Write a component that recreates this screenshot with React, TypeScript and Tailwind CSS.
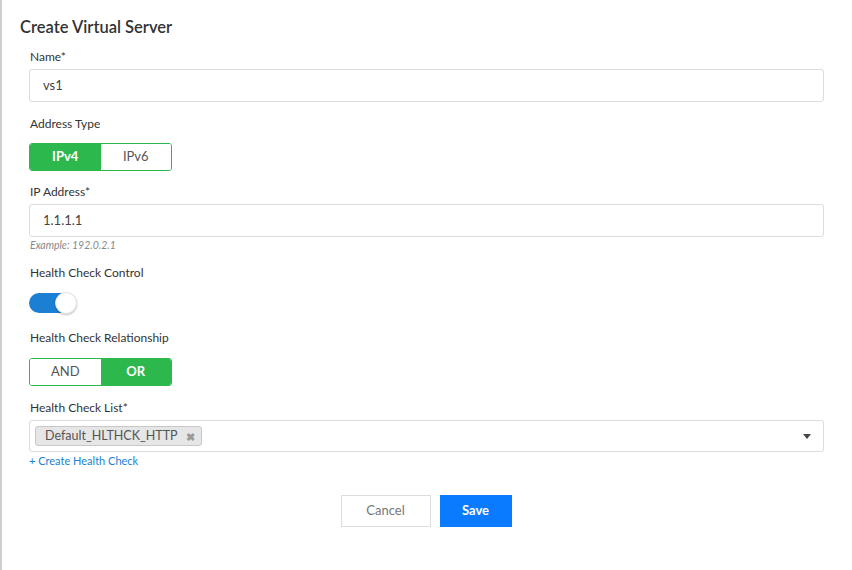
import React from "react";

function Label({ children, className = "" }: { children: React.ReactNode; className?: string }) {
  return <div className={`text-[12px] leading-4 text-[#333] pl-[1px] ${className}`}>{children}</div>;
}

function Segmented({ options, active, className = "" }: { options: string[]; active: string; className?: string }) {
  return (
    <div className={`flex w-[143px] h-[28px] rounded-[3px] border border-[#2db84d] overflow-hidden ${className}`}>
      {options.map((o) => (
        <div
          key={o}
          className={
            o === active
              ? "flex-1 flex items-center justify-center bg-[#2db84d] text-white font-bold text-[13px]"
              : "flex-1 flex items-center justify-center bg-white text-[#555] text-[13px]"
          }
        >
          {o}
        </div>
      ))}
    </div>
  );
}

export default function App() {
  return (
    <div
      className="w-[852px] h-[570px] bg-white border-l-2 border-[#cfcfcf] relative"
      style={{ fontFamily: "Lato, 'Open Sans', sans-serif" }}
    >
      <div className="pt-[17px] pl-[18px] text-[16.5px] leading-5 font-semibold text-[#333]">Create Virtual Server</div>

      <div className="pl-[27px] pr-[28px]">
        <Label className="mt-[12px]">Name*</Label>
        <div className="mt-[4px] h-[33px] border border-[#dcdcdc] rounded-[3px] flex items-center pl-[13px] text-[13px] text-[#444]">vs1</div>

        <Label className="mt-[14px]">Address Type</Label>
        <Segmented className="mt-[11px]" options={["IPv4", "IPv6"]} active="IPv4" />

        <Label className="mt-[13px]">IP Address*</Label>
        <div className="mt-[4px] h-[33px] border border-[#dcdcdc] rounded-[3px] flex items-center pl-[13px] text-[13px] text-[#444]">1.1.1.1</div>
        <div className="mt-[1px] text-[10.5px] leading-[14px] italic text-[#888] pl-[1px]">Example: 192.0.2.1</div>

        <Label className="mt-[13px]">Health Check Control</Label>
        <div className="mt-[12px] relative w-[47px] h-[20px]">
          <div className="absolute inset-0 rounded-full bg-[#1b7fd3]" />
          <div className="absolute right-[-1px] top-[-1px] w-[22px] h-[22px] rounded-full bg-white border border-[#e4e4e4] shadow-[0_1px_2px_rgba(0,0,0,0.25)]" />
        </div>

        <Label className="mt-[17px]">Health Check Relationship</Label>
        <Segmented className="mt-[12px] h-[27px]" options={["AND", "OR"]} active="OR" />

        <Label className="mt-[14px]">Health Check List*</Label>
        <div className="mt-[4px] h-[32px] border border-[#dcdcdc] rounded-[3px] flex items-center pl-[5px] pr-[12px]">
          <div className="h-[20px] w-[167px] flex items-center bg-[#e6e6e6] border border-[#c8c8c8] rounded-[3px] pl-[9px] text-[12.5px] text-[#555]">
            <span>Default_HLTHCK_HTTP</span>
            <span className="ml-[8px] text-[#999] text-[11px] font-bold leading-none">✖</span>
          </div>
          <div className="flex-1" />
          <svg width="8" height="5" viewBox="0 0 8 5">
            <path d="M0 0 L8 0 L4 5 Z" fill="#444" />
          </svg>
        </div>
        <div className="mt-[2px] text-[11px] leading-[14px] text-[#1b7fd3]">+ Create Health Check</div>
      </div>

      <div className="mt-[27px] flex justify-center gap-[9px] pr-[2px]">
        <button className="w-[90px] h-[32px] border border-[#dcdcdc] bg-white text-[13px] text-[#777]">Cancel</button>
        <button className="w-[72px] h-[32px] bg-[#0a7bff] text-white text-[13px] font-bold">Save</button>
      </div>
    </div>
  );
}
